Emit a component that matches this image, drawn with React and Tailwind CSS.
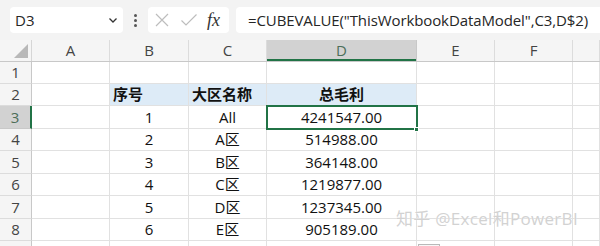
import React from "react";

const cols = [
  { key: "A", w: "w-[78px]" },
  { key: "B", w: "w-[79px]" },
  { key: "C", w: "w-[78px]" },
  { key: "D", w: "w-[150px]" },
  { key: "E", w: "w-[78px]" },
  { key: "F", w: "w-[78px]" },
  { key: "G", w: "flex-1" },
];

const rows = [
  { n: 1, h: "h-[22px]", cells: {} },
  { n: 2, h: "h-[22px]", head: true, cells: { B: "序号", C: "大区名称", D: "总毛利" } },
  { n: 3, h: "h-[23px]", cells: { B: "1", C: "All", D: "4241547.00" } },
  { n: 4, h: "h-[22px]", cells: { B: "2", C: "A区", D: "514988.00" } },
  { n: 5, h: "h-[23px]", cells: { B: "3", C: "B区", D: "364148.00" } },
  { n: 6, h: "h-[22px]", cells: { B: "4", C: "C区", D: "1219877.00" } },
  { n: 7, h: "h-[23px]", cells: { B: "5", C: "D区", D: "1237345.00" } },
  { n: 8, h: "h-[22px]", cells: { B: "6", C: "E区", D: "905189.00" } },
  { n: 9, h: "h-[22px]", cells: {}, hidden: true },
];

const font = "font-['Open_Sans','Noto_Sans_CJK_SC',sans-serif]";

export default function App() {
  return (
    <div className={`relative h-[246px] w-[600px] overflow-hidden bg-white ${font}`}>
      {/* 编辑栏 */}
      <div className="flex h-[40px] items-center bg-[#f3f3f3] pl-[10px]">
        <div className="flex h-[26px] w-[113px] items-center justify-between rounded-[4px] bg-white pl-[5px] pr-[4px] text-[15px] text-[#262626]">
          <span>D3</span>
          <svg width="12" height="12" viewBox="0 0 12 12" fill="none">
            <path d="M2.5 4.5 6 8l3.5-3.5" stroke="#333" strokeWidth="1.3" />
          </svg>
        </div>
        <div className="flex w-[25px] flex-col items-center gap-[2px]">
          <span className="h-[3px] w-[3px] rounded-full bg-[#555]" />
          <span className="h-[3px] w-[3px] rounded-full bg-[#555]" />
          <span className="h-[3px] w-[3px] rounded-full bg-[#555]" />
        </div>
        <div className="flex h-[26px] w-[81px] items-center rounded-[4px] bg-white pl-[6px]">
          <svg width="16" height="16" viewBox="0 0 16 16" fill="none">
            <path d="M2 2l12 12M14 2 2 14" stroke="#bdbdbd" strokeWidth="1.2" />
          </svg>
          <svg className="ml-[10px]" width="18" height="16" viewBox="0 0 18 16" fill="none">
            <path d="M1.5 8.5 6 13 16.5 2.5" stroke="#bdbdbd" strokeWidth="1.2" />
          </svg>
          <span className="ml-[9px] font-['Liberation_Serif',serif] text-[18px] italic text-[#333]">fx</span>
        </div>
        <div className="ml-[7px] flex h-[26px] flex-1 items-center rounded-l-[4px] bg-white pl-[12px] text-[15px] tracking-[-0.1px] text-[#262626]">
          =CUBEVALUE("ThisWorkbookDataModel",C3,D$2)
        </div>
      </div>

      {/* 列标题 */}
      <div className="flex h-[22px] border-b border-[#c8c8c8] bg-[#f5f5f5]">
        <div className="relative w-[32px] border-r border-[#d6d6d6]">
          <svg className="absolute bottom-[3px] right-[3px]" width="14" height="14" viewBox="0 0 14 14">
            <path d="M14 0V14H0Z" fill="#b8b8b8" />
          </svg>
        </div>
        {cols.map((c) => (
          <div
            key={c.key}
            className={`${c.w} flex items-center justify-center border-r text-[15px] ${
              c.key === "D"
                ? "border-[#c8c8c8] bg-[#d2d2d2] text-[#4c6e58] shadow-[inset_0_-2px_0_#217346]"
                : "border-[#dcdcdc] text-[#444]"
            }`}
          >
            {c.key !== "G" && c.key}
          </div>
        ))}
      </div>

      {/* 表格主体 */}
      {rows.map((r) => (
        <div key={r.n} className={`flex ${r.h}`}>
          <div
            className={`flex w-[32px] items-center justify-center border-b border-r text-[15px] ${
              r.n === 3
                ? "border-b-[#c8c8c8] border-r-[#217346] border-r-2 bg-[#d2d2d2] text-[#4c6e58]"
                : "border-b-[#dcdcdc] border-r-[#c8c8c8] bg-[#f5f5f5] text-[#444]"
            }`}
          >
            {!r.hidden && r.n}
          </div>
          {cols.map((c) => {
            const v = r.cells[c.key];
            const blue = r.head && ["B", "C", "D"].includes(c.key);
            const align = r.head && c.key !== "D" ? "justify-start pl-[3px]" : "justify-center";
            return (
              <div
                key={c.key}
                className={`${c.w} flex items-center border-b border-r border-[#e1e1e1] text-[15px] text-[#111] ${align} ${
                  blue ? "bg-[#ddebf7] font-bold" : ""
                }`}
              >
                {v}
              </div>
            );
          })}
        </div>
      ))}

      {/* 选中单元格 D3 */}
      <div className="pointer-events-none absolute left-[266px] top-[105px] h-[25px] w-[152px] border-2 border-[#217346]" />
      <div className="absolute left-[414px] top-[127px] h-[5px] w-[5px] border border-white bg-[#217346]" />

      {/* 快速分析按钮 */}
      <div className="absolute left-[418px] top-[244px] h-[8px] w-[22px] border border-[#b9b9b9] bg-[#f7f7f7]" />

      {/* 水印 */}
      <div className="pointer-events-none absolute left-[396px] top-[206px] text-[17px] tracking-[0.3px] text-[#d2d2d2] [text-shadow:0_0_1px_#fff]">
        知乎 @Excel和PowerBI
      </div>
    </div>
  );
}
